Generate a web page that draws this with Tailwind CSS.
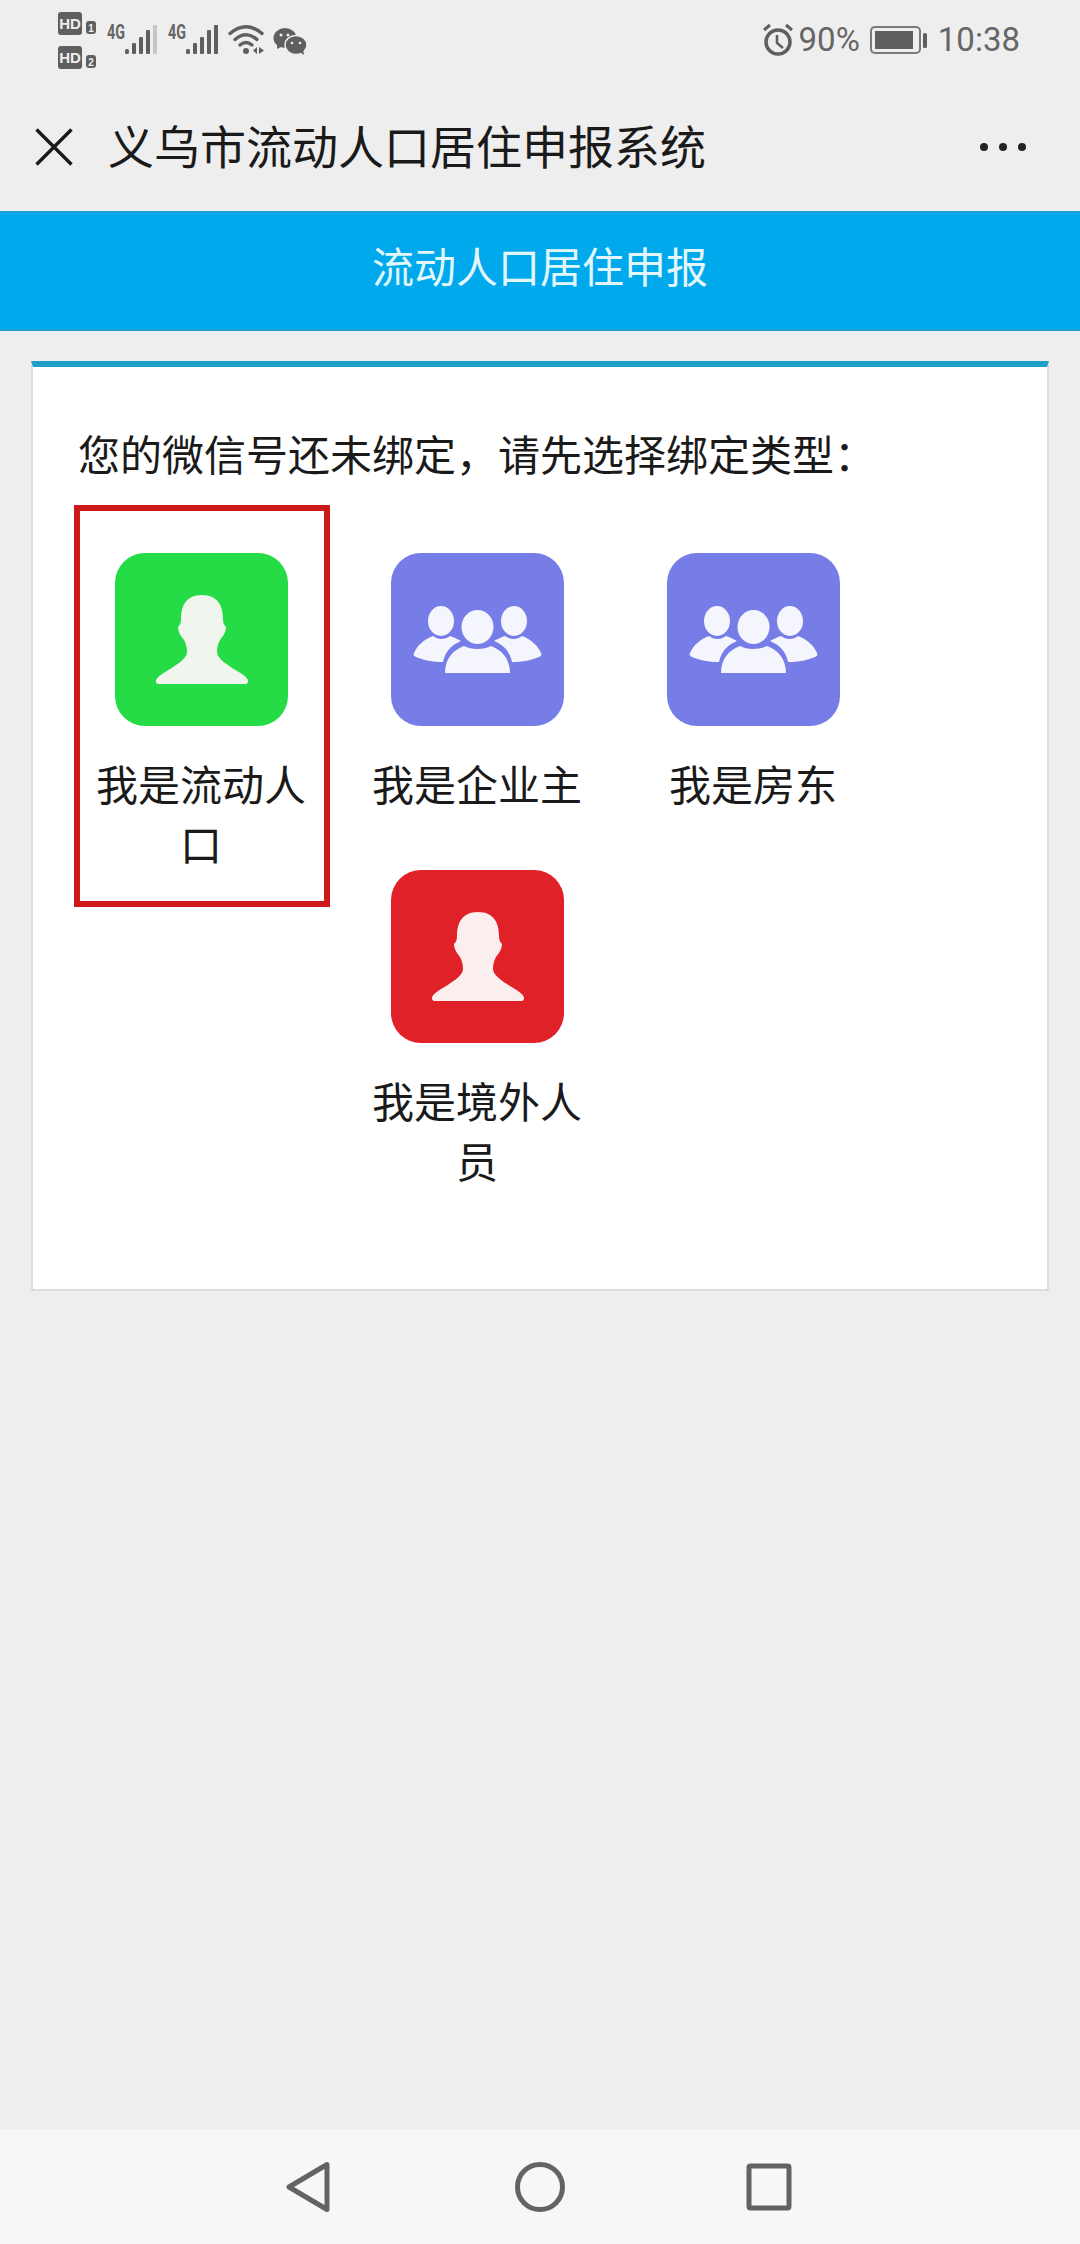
<!DOCTYPE html>
<html>
<head>
  <title>流动人口居住申报</title>
  <meta charset="UTF-8">
  <meta name="viewport" content="width=device-width, initial-scale=1.0">
  <script src="https://cdn.jsdelivr.net/npm/@tailwindcss/browser@4"></script>
</head>
<body>
  <div class="flex h-screen w-full flex-col overflow-hidden bg-[#eeeeee] font-['Noto_Sans_CJK_SC',sans-serif]">

    <!-- Status bar -->
    <div class="flex h-[80px] shrink-0 items-start justify-between">
      <svg class="h-[80px] w-[320px]" viewBox="0 0 320 80">
        <rect x="58" y="12" width="24" height="23" rx="3" fill="#5f5f5f"/>
        <text x="70" y="29" text-anchor="middle" font-family="Liberation Sans" font-weight="700" font-size="15" fill="#eeeeee">HD</text>
        <rect x="86" y="21" width="10" height="13" rx="3" fill="#5f5f5f"/>
        <text x="91" y="32" text-anchor="middle" font-family="Liberation Sans" font-weight="700" font-size="10" fill="#eeeeee">1</text>
        <rect x="58" y="46" width="24" height="23" rx="3" fill="#5f5f5f"/>
        <text x="70" y="63" text-anchor="middle" font-family="Liberation Sans" font-weight="700" font-size="15" fill="#eeeeee">HD</text>
        <rect x="86" y="55" width="10" height="13" rx="3" fill="#5f5f5f"/>
        <text x="91" y="66" text-anchor="middle" font-family="Liberation Sans" font-weight="700" font-size="10" fill="#eeeeee">2</text>

        <text x="107" y="39" font-family="Roboto" font-weight="700" font-size="20" textLength="18" lengthAdjust="spacingAndGlyphs" fill="#666666">4G</text>
        <g fill="#5f5f5f">
          <rect x="125" y="49" width="4" height="5" rx="1.5"/>
          <rect x="132" y="43" width="4" height="11" rx="1"/>
          <rect x="139" y="37" width="4" height="17" rx="1"/>
          <rect x="146" y="30" width="4" height="24" rx="1"/>
          <rect x="153" y="25" width="4" height="29" rx="1" fill="#c6c6c6"/>
        </g>
        <text x="168" y="39" font-family="Roboto" font-weight="700" font-size="20" textLength="18" lengthAdjust="spacingAndGlyphs" fill="#666666">4G</text>
        <g fill="#5f5f5f">
          <rect x="186" y="49" width="4" height="5" rx="1.5"/>
          <rect x="193" y="43" width="4" height="11" rx="1"/>
          <rect x="200" y="37" width="4" height="17" rx="1"/>
          <rect x="207" y="30" width="4" height="24" rx="1"/>
          <rect x="214" y="25" width="4" height="29" rx="1"/>
        </g>

        <!-- wifi -->
        <g fill="none" stroke="#5f5f5f" stroke-width="3.4" stroke-linecap="round">
          <path d="M230 33.5 Q246 20 262 33.5"/>
          <path d="M235 39.5 Q246 30 257 39.5"/>
          <path d="M240 45 Q246 40 252 45"/>
        </g>
        <circle cx="246" cy="51" r="3" fill="#5f5f5f"/>
        <path d="M257 47 L257 54 L253 50.5 Z M259 47 L259 54 L264 50.5 Z" fill="#5f5f5f"/>

        <!-- wechat -->
        <ellipse cx="285" cy="38" rx="11.5" ry="10" fill="#5f5f5f"/>
        <path d="M277 44 L277 49 L283 46 Z" fill="#5f5f5f"/>
        <ellipse cx="296" cy="45" rx="11" ry="9.5" fill="#5f5f5f" stroke="#eeeeee" stroke-width="1.5"/>
        <path d="M300 52 L304 55 L303 49 Z" fill="#5f5f5f"/>
        <circle cx="281" cy="35" r="1.5" fill="#eeeeee"/>
        <circle cx="288" cy="35" r="1.5" fill="#eeeeee"/>
        <circle cx="292" cy="43" r="1.3" fill="#eeeeee"/>
        <circle cx="300" cy="43" r="1.3" fill="#eeeeee"/>
      </svg>

      <div class="flex h-[80px] items-center pr-[60px] pb-[1px] font-['Roboto',sans-serif] text-[33px] text-[#666666]">
        <svg class="mr-[5px] h-[36px] w-[32px]" viewBox="0 0 32 36" fill="none" stroke="#5f5f5f">
          <circle cx="16" cy="20" r="12" stroke-width="3.5"/>
          <path d="M15 13 V21 L21 26" stroke-width="2.6"/>
          <path d="M2 8 L8 3 M24 3 L30 8" stroke-width="3"/>
        </svg>
        <span>90%</span>
        <svg class="mx-[10px] h-[28px] w-[58px]" viewBox="0 0 58 28">
          <rect x="1" y="1" width="49" height="26" rx="4" fill="none" stroke="#7a7a7a" stroke-width="2"/>
          <rect x="5" y="5" width="38" height="18" fill="#5f5f5f"/>
          <rect x="53" y="7" width="4" height="15" rx="1.5" fill="#5f5f5f"/>
        </svg>
        <span>10:38</span>
      </div>
    </div>

    <!-- WeChat title -->
    <div class="flex h-[131px] shrink-0 items-start pt-[24px]">
      <svg class="ml-[35px] mt-[24px] h-[38px] w-[38px]" viewBox="0 0 38 38" fill="none" stroke="#1a1a1a" stroke-width="3.4">
        <path d="M1.5 1.5 L36.5 36.5 M36.5 1.5 L1.5 36.5"/>
      </svg>
      <div class="ml-[35px] text-[46px] leading-[80px] text-[#1a1a1a]">义乌市流动人口居住申报系统</div>
      <div class="ml-auto mr-[54px] mt-[39px] flex gap-[11px]">
        <span class="h-[8px] w-[8px] rounded-full bg-[#222222]"></span>
        <span class="h-[8px] w-[8px] rounded-full bg-[#222222]"></span>
        <span class="h-[8px] w-[8px] rounded-full bg-[#222222]"></span>
      </div>
    </div>

    <!-- Blue header -->
    <div class="flex h-[120px] shrink-0 items-center justify-center border-y-2 border-[#1aa0d2] bg-[#00a8ec] pb-[13px] text-[42px] text-[#e2f7fc]">流动人口居住申报</div>

    <!-- Card -->
    <div class="mx-[31px] mt-[30px] h-[930px] shrink-0 border-x-2 border-b-2 border-t-[6px] border-x-[#dcdcdc] border-b-[#dcdcdc] border-t-[#1fa0c9] bg-white">
      <div class="pl-[45px] pt-[56px] text-[42px] leading-[60px] text-[#1a1a1a]">您的微信号还未绑定，请先选择绑定类型：</div>
      <div class="ml-[41px] mt-[22px] grid grid-cols-[repeat(3,256px)] gap-x-[20px] grid-rows-[317px_317px] text-center text-[42px] leading-[60px] text-[#1a1a1a]">

        <div class="row-span-2 h-[402px] border-[6px] border-[#cc1a1c] pl-[14px] pr-[16px] pt-[42px]">
          <svg class="mx-auto mb-[27px] h-[173px] w-[173px]" viewBox="0 0 173 173">
            <rect width="173" height="173" rx="30" fill="#25dc47"/>
            <path d="M87 42 C71 42 66 53 66 66 C66 70 65 72 63 74 C63 79 66 83 69 87 C71 91 72 94 72 99 C72 106 60 113 47 121 C41 125 39 129 43 131 H131 C135 129 133 125 127 121 C114 113 102 106 102 99 C102 94 103 91 105 87 C108 83 111 79 111 74 C109 72 108 70 108 66 C108 53 103 42 87 42 Z" fill="#f0f5ee"/>
          </svg>
          <div>我是流动人口</div>
        </div>

        <div class="pl-[18px] pr-[20px] pt-[48px]">
          <svg class="mx-auto mb-[27px] h-[173px] w-[173px]" viewBox="0 0 173 173">
            <rect width="173" height="173" rx="30" fill="#777de6"/>
            <g fill="#f5f6fd">
              <ellipse cx="50" cy="68" rx="13" ry="15"/>
              <ellipse cx="123" cy="68" rx="13" ry="15"/>
              <ellipse cx="86.5" cy="74" rx="16" ry="17"/>
              <path d="M23 100 C26 93 32 87 42 83 C47 87 54 87 59 83 C63 84 66 86 70 88 C60 92 54 99 52 109 C42 109 32 107 25 104 C23 103 22 102 23 100 Z"/>
              <path d="M150 100 C147 93 141 87 131 83 C126 87 119 87 114 83 C110 84 107 86 103 88 C113 92 119 99 121 109 C131 109 141 107 148 104 C150 103 151 102 150 100 Z"/>
              <path d="M54 120 C54 106 62 97 73 93 C80 97 93 97 100 93 C111 97 119 106 119 120 Z"/>
            </g>
          </svg>
          <div class="-mx-[10px]">我是企业主</div>
        </div>

        <div class="pl-[18px] pr-[20px] pt-[48px]">
          <svg class="mx-auto mb-[27px] h-[173px] w-[173px]" viewBox="0 0 173 173">
            <rect width="173" height="173" rx="30" fill="#777de6"/>
            <g fill="#f5f6fd">
              <ellipse cx="50" cy="68" rx="13" ry="15"/>
              <ellipse cx="123" cy="68" rx="13" ry="15"/>
              <ellipse cx="86.5" cy="74" rx="16" ry="17"/>
              <path d="M23 100 C26 93 32 87 42 83 C47 87 54 87 59 83 C63 84 66 86 70 88 C60 92 54 99 52 109 C42 109 32 107 25 104 C23 103 22 102 23 100 Z"/>
              <path d="M150 100 C147 93 141 87 131 83 C126 87 119 87 114 83 C110 84 107 86 103 88 C113 92 119 99 121 109 C131 109 141 107 148 104 C150 103 151 102 150 100 Z"/>
              <path d="M54 120 C54 106 62 97 73 93 C80 97 93 97 100 93 C111 97 119 106 119 120 Z"/>
            </g>
          </svg>
          <div>我是房东</div>
        </div>

        <div class="col-start-2 pl-[18px] pr-[20px] pt-[48px]">
          <svg class="mx-auto mb-[27px] h-[173px] w-[173px]" viewBox="0 0 173 173">
            <rect width="173" height="173" rx="30" fill="#e02127"/>
            <path d="M87 42 C71 42 66 53 66 66 C66 70 65 72 63 74 C63 79 66 83 69 87 C71 91 72 94 72 99 C72 106 60 113 47 121 C41 125 39 129 43 131 H131 C135 129 133 125 127 121 C114 113 102 106 102 99 C102 94 103 91 105 87 C108 83 111 79 111 74 C109 72 108 70 108 66 C108 53 103 42 87 42 Z" fill="#fbeeee"/>
          </svg>
          <div class="-mx-[10px] px-[3px]">我是境外人员</div>
        </div>
      </div>
    </div>

    <div class="flex-1"></div>

    <!-- Android nav bar -->
    <div class="flex h-[115px] shrink-0 items-start bg-[#f7f7f7] pt-[32px]">
      <svg class="ml-[285px] h-[52px] w-[46px]" viewBox="0 0 46 52" fill="none" stroke="#636363" stroke-width="5" stroke-linejoin="round">
        <path d="M4 26 L42 3.5 V48.5 Z"/>
      </svg>
      <svg class="ml-[184px] h-[52px] w-[50px]" viewBox="0 0 50 52" fill="none" stroke="#636363" stroke-width="5">
        <circle cx="25" cy="26" r="22.5"/>
      </svg>
      <svg class="ml-[181px] h-[52px] w-[46px]" viewBox="0 0 46 52" fill="none" stroke="#636363" stroke-width="5" stroke-linejoin="round">
        <rect x="3" y="5" width="40" height="42" rx="1.5"/>
      </svg>
    </div>
  </div>
</body>
</html>
